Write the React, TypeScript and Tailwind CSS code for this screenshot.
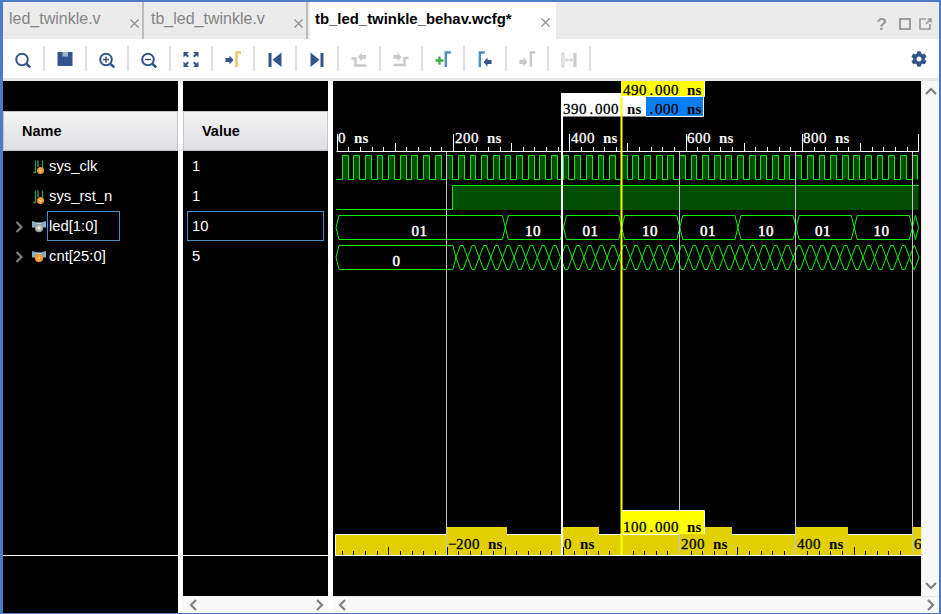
import React from "react";
import { FaCog } from "react-icons/fa";

const NAVY = "#34558b";
const GREY = "#c9c9c9";
const BLUE = "#4a90c0";
const LIME = "#0cf00c";
const DARK = "#004d00";

const Mag = ({ kind }: { kind?: "plus" | "minus" }) => (
  <svg width="24" height="24" viewBox="0 0 24 24" fill="none" stroke={NAVY}>
    <circle cx="11" cy="12.5" r="5.8" strokeWidth="2" />
    <path d="M15.3 16.8l4 3.6" strokeWidth="2.6" />
    {kind && <path d="M8 12.5h6" strokeWidth="1.5" />}
    {kind === "plus" && <path d="M11 9.5v6" strokeWidth="1.5" />}
  </svg>
);

const Ico = ({ children }: { children: React.ReactNode }) => (
  <svg width="24" height="24" viewBox="0 0 24 24" fill="none">
    {children}
  </svg>
);

const ArrowR = ({ x, y, c }: { x: number; y: number; c: string }) => (
  <path d={`M${x} ${y - 2}h4v-2.5l4 4.5-4 4.5v-2.5h-4z`} fill={c} />
);
const ArrowL = ({ x, y, c }: { x: number; y: number; c: string }) => (
  <path d={`M${x + 8} ${y - 2}h-4v-2.5l-4 4.5 4 4.5v-2.5h4z`} fill={c} />
);

const tools: React.ReactNode[] = [
  <Mag key="a" />,
  <Ico key="b">
    <path d="M4.5 5h15v14h-15z" fill={NAVY} />
    <path d="M9.5 5h5.5v4.5h-5.5z" fill="#9fb2d0" />
  </Ico>,
  <Mag key="c" kind="plus" />,
  <Mag key="d" kind="minus" />,
  <Ico key="e">
    <path d="M4.5 5h5.5l-2 2 2 2-1.5 1.5-2-2-2 2zM19.5 5h-5.5l2 2-2 2 1.5 1.5 2-2 2 2zM4.5 20h5.5l-2-2 2-2-1.5-1.5-2 2-2-2zM19.5 20h-5.5l2-2-2-2 1.5-1.5 2 2 2-2z" fill={NAVY} />
  </Ico>,
  <Ico key="f">
    <ArrowR x={4.5} y={13} c={NAVY} />
    <path d="M15.5 20v-14.500h4.500" stroke="#e3c568" strokeWidth="2.400" />
  </Ico>,
  <Ico key="g">
    <path d="M5.500 6h3v14h-3zM18.500 5.500v14.500l-9-7.250z" fill={NAVY} />
  </Ico>,
  <Ico key="h">
    <path d="M15.500 6h3v14h-3zM5.500 5.500v14.500l9-7.250z" fill={NAVY} />
  </Ico>,
  <Ico key="i">
    <path d="M4.500 11.500h4v7h11" stroke={GREY} strokeWidth="2.400" />
    <ArrowL x={11} y={10} c={GREY} />
  </Ico>,
  <Ico key="j">
    <path d="M4.500 18h11v-7h4" stroke={GREY} strokeWidth="2.400" />
    <ArrowR x={4.500} y={10} c={GREY} />
  </Ico>,
  <Ico key="k">
    <path d="M4.500 13.500h8M8.500 9.500v8" stroke="#3fae49" strokeWidth="2.400" />
    <path d="M14.800 20v-14.500h5" stroke={BLUE} strokeWidth="2.400" />
  </Ico>,
  <Ico key="l">
    <path d="M6.800 20v-14.500h5" stroke={BLUE} strokeWidth="2.400" />
    <ArrowL x={10.500} y={15} c={NAVY} />
  </Ico>,
  <Ico key="m">
    <ArrowR x={4.500} y={15} c={GREY} />
    <path d="M15.800 20v-14.500h4.500" stroke={GREY} strokeWidth="2.400" />
  </Ico>,
  <Ico key="n">
    <path d="M5 6h2v14h-2z" stroke={GREY} strokeWidth="1" />
    <path d="M16.500 6h3v14h-3z" fill={GREY} />
    <path d="M8.500 13h7M10.500 11l-2 2 2 2M13.500 11l2 2-2 2" stroke={GREY} strokeWidth="1" />
  </Ico>,
];

const SignalIcon = () => (
  <svg width="12" height="14" viewBox="0 0 12 14" fill="none" className="shrink-0">
    <path d="M0.500 12.500h2v-12M9.500 8v-7.500" stroke="#2f9e57" strokeWidth="1.300" />
    <path d="M5 7v-6.500" stroke="#7fbf95" strokeWidth="1" />
    <circle cx="7.500" cy="10.500" r="3.500" fill="#ef9a2a" />
    <path d="M6.200 9.500l1.300 2.500 1.300-2.500" stroke="#fff" strokeWidth="0.700" />
  </svg>
);

const BusIcon = ({ c }: { c: string }) => (
  <svg width="14" height="13" viewBox="0 0 14 13" fill="none" className="shrink-0">
    <path d="M0 1l5 1.500v5h-5zM14 1l-5 1.500v5h5z" fill="#85aec8" />
    <path d="M5 2.500h4v2h-4z" fill="#cfdde8" />
    <circle cx="7" cy="8" r="3.800" fill={c} stroke={c === "#ef9a2a" ? "#ef9a2a" : "#9a9a9a"} />
    <circle cx="7" cy="8" r="1.500" fill={c === "#ef9a2a" ? "#f7c98a" : "#e8e8e8"} />
  </svg>
);

const Chev = ({ d, w = 10, h = 12 }: { d: string; w?: number; h?: number }) => (
  <svg width={w} height={h} viewBox={`0 0 ${w} ${h}`} fill="none" stroke="#7f7f7f" strokeWidth="2.200">
    <path d={d} />
  </svg>
);

const Close = () => (
  <svg width="9" height="9" viewBox="0 0 9 9" stroke="#8e8e8e" strokeWidth="1.100">
    <path d="M0.500 0.500l8 8M8.500 0.500l-8 8" />
  </svg>
);

const Tab = ({ label, w }: { label: string; w: string }) => (
  <div className={`${w} h-full flex items-center justify-between pl-[6px] pr-[3px] border-r-2 border-[#bdbdbd] mr-[1px]`}>
    <span className="text-[16px] text-[#858585] leading-none -mt-[3px]">{label}</span>
    <span className="flex mt-[5px]"><Close /></span>
  </div>
);

const X0 = 336.7;
const P = 11.63;
const px = (ns: number) => X0 + 0.5815 * ns;
const rng = (a: number, b: number) => Array.from({ length: b - a + 1 }, (_, i) => a + i);
const snap = (x: number) => Math.round(x) + 0.5;

const clockRises = rng(0, 49).map((k) => 341.7 + k * P);
let clockPath = `M336 179.500`;
clockRises.forEach((r) => {
  const a = snap(r);
  const f = Math.min(snap(r + P / 2), 919);
  clockPath += `L${a} 179.500L${a} 155.500L${f} 155.500` + (f < 919 ? `L${f} 179.500` : "");
});

const seg = (a: number, b: number, top: number, bot: number, e: number) => {
  const m = (top + bot) / 2;
  return `M${a} ${m}L${a + e} ${top}L${b - e} ${top}L${b} ${m}L${b - e} ${bot}L${a + e} ${bot}Z`;
};

const ledX = [336, ...rng(0, 7).map((k) => px(290 + k * 100)), 918.5];
const cntX = [336, ...rng(0, 39).map((k) => px(205 + k * 20)), 919];
const ledLabels: [number, string][] = [
  [419.5, "01"], [533, "10"], [590.5, "01"], [650, "10"], [708, "01"], [766, "10"], [823, "01"], [881.5, "10"],
];

/* Fixed-cell chart label: digits on an 8px pitch, the unit in bold. */
const Lab = ({ x, y, t, fill, bold }: { x: number; y: number; t: string; fill: string; bold?: boolean }) => {
  const [num, unit] = t.split(" ");
  const xs = num.split("").map((c, i) => x + i * 8 + (c === "." ? 2.5 : 0)).join(" ");
  const ux = x + (num.length + 1) * 8;
  return (
    <text y={y} fill={fill}>
      <tspan x={xs} stroke={fill} strokeWidth={bold ? 0.5 : 0.3}>{num}</tspan>
      {unit && (
        <tspan x={`${ux} ${ux + 8.5}`} fontWeight="bold">{unit}</tspan>
      )}
    </text>
  );
};

const WaveChart = () => (
  <svg
    width="588"
    height="515"
    viewBox="333 81 588 515"
    className="block shrink-0 font-['Liberation_Serif',serif] text-[15px]"
  >
    <rect x="333" y="81" width="588" height="515" fill="#000" />

    {/* ruler */}
    <path d="M336.500 151.500H919" stroke="#fff" />
    {rng(0, 50).map((i) => {
      const x = snap(X0 + i * P);
      const h = i % 10 === 0 ? 17 : i % 5 === 0 ? 8 : 4;
      return <path key={i} d={`M${x} 151V${151 - h}`} stroke="#fff" />;
    })}
    {([
      [338, "0 ns"], [455, "200 ns"], [571, "400 ns"], [687, "600 ns"], [803, "800 ns"],
    ] as [number, string][]).map(([x, t]) => (
      <Lab key={t} x={x} y={143} t={t} fill="#fff" />
    ))}

    {/* sys_clk */}
    {clockRises.map((r) => (
      <rect key={r} x={snap(r)} y={155.500} width={Math.min(snap(r + P / 2), 919) - snap(r)} height={24} fill={DARK} />
    ))}
    <path d={clockPath} fill="none" stroke={LIME} />

    {/* sys_rst_n */}
    <rect x="453" y="186" width="465.500" height="24" fill={DARK} />
    <path d="M336 209.500H452.500V185.500H919" fill="none" stroke={LIME} />

    {/* led */}
    {ledX.slice(0, -1).map((a, i) => (
      <path key={a} d={seg(a, ledX[i + 1], 215.500, 239.500, 3)} fill="none" stroke={LIME} />
    ))}
    {ledLabels.map(([x, t], i) => (
      <Lab key={i} x={x - 8} y={236} t={t} fill="#fff" bold />
    ))}

    {/* cnt */}
    {cntX.slice(0, -1).map((a, i) => (
      <path key={a} d={seg(a, cntX[i + 1], 245.500, 269.500, i === 0 ? 3 : 4.5)} fill="none" stroke={LIME} />
    ))}
    <Lab x={392.5} y={266} t="0" fill="#fff" bold />

    {/* time axis */}
    <path
      d="M335.500 534.500H446.500V527H507V534.500H563V527H599V534.500H679.500V527H732V534.500H795.500V527H848V534.500H912.500V527H921V555.500H335.500Z"
      fill="#e2d000"
    />
    <path
      d="M335.500 555V534.500H446M507 534.500H561M599 534.500H680M732 534.500H795M848 534.500H912M335 555.500H921"
      fill="none"
      stroke="#fff"
    />
    {rng(-9, 41).map((i) => {
      const x = snap(446.5 + i * P);
      const h = i % 5 === 0 ? 8 : 4;
      return <path key={i} d={`M${x} 555V${555 - h}`} stroke="#000" />;
    })}
    {([
      [448, "\u2212200 ns"], [564, "0 ns"], [681, "200 ns"], [797, "400 ns"], [914, "6"],
    ] as [number, string][]).map(([x, t]) => (
      <Lab key={t} x={x} y={548.5} t={t} fill="#000" />
    ))}

    {/* grey grid markers */}
    {[446.5, 679.5, 795.5, 912.5].map((x) => (
      <path key={x} d={`M${x} 152V555`} stroke="#c4c4c4" />
    ))}

    {/* delta flag */}
    <rect x="621" y="510.500" width="83" height="23.500" fill="#ffff00" />
    <path d="M621 510.500H704.500V534" fill="none" stroke="#fff" />
    <Lab x={623} y={531.5} t="100.000 ns" fill="#000" />

    {/* cursor flags */}
    <rect x="561" y="93" width="85" height="23.500" fill="#fff" />
    <Lab x={563} y={114} t="390.000 ns" fill="#000" />
    <rect x="646" y="97" width="57.500" height="19" fill="#0a7df2" />
    <path d="M703.500 96V116.500H646" fill="none" stroke="#fff" />
    <Lab x={647} y={114} t=".000 ns" fill="#000" />
    <rect x="621" y="81" width="83" height="15" fill="#ffff00" />
    <path d="M620.500 96.500H704.500V81" fill="none" stroke="#fff" />
    <Lab x={623} y={95} t="490.000 ns" fill="#000" />

    {/* cursors */}
    <rect x="561" y="116" width="2" height="439.500" fill="#fff" />
    <rect x="620.500" y="97" width="2" height="458.500" fill="#ffff00" />
  </svg>
);

const rows = [
  { name: "sys_clk", value: "1", icon: <SignalIcon /> },
  { name: "sys_rst_n", value: "1", icon: <SignalIcon /> },
  { name: "led[1:0]", value: "10", icon: <BusIcon c="#b9b9b9" />, selected: true, expand: true },
  { name: "cnt[25:0]", value: "5", icon: <BusIcon c="#ef9a2a" />, expand: true },
];

const Head = ({ label, cls }: { label: string; cls: string }) => (
  <div className={`h-[40px] shrink-0 flex items-center pt-[2px] bg-gradient-to-b from-[#f5f5f5] to-[#dedee2] border border-[#c4c4c4] text-[14.500px] font-bold text-black ${cls}`}>
    {label}
  </div>
);

export default function App() {
  return (
    <div className="w-[941px] h-[614px] overflow-hidden flex flex-col bg-[#4a7cc9] pt-[2px] pl-[3px] pr-[2px] pb-[1px] font-['Liberation_Sans',Arial,sans-serif]">
      {/* tabs */}
      <div className="h-[37px] shrink-0 flex bg-[#ebebeb]">
        <Tab label="led_twinkle.v" w="w-[141px]" />
        <Tab label="tb_led_twinkle.v" w="w-[163px]" />
        <div className="ml-[1px] w-[246px] bg-white flex items-center justify-between pl-[6px] pr-[6px]">
          <span className="text-[14.900px] font-bold text-black leading-none -mt-[3px] -ml-[1px]">tb_led_twinkle_behav.wcfg*</span>
          <span className="flex mt-[4px]"><Close /></span>
        </div>
        <div className="flex-1 flex items-center justify-end gap-[9px] pr-[7px] pt-[7px] text-[#9a9a9a]">
          <span className="text-[17px] font-bold leading-none mr-[3px]">?</span>
          <svg width="12" height="12" viewBox="0 0 12 12" fill="none" stroke="#9a9a9a" strokeWidth="2" className="-mr-[1px]">
            <rect x="1" y="1" width="10" height="10" />
          </svg>
          <svg width="13" height="12" viewBox="0 0 13 12" fill="none" stroke="#9a9a9a" strokeWidth="1.600">
            <path d="M7 1H1v10h10V6M7 6l5-5M8.500 1H12v3.500" />
          </svg>
        </div>
      </div>

      {/* toolbar */}
      <div className="h-[39px] shrink-0 flex items-center bg-white">
        {tools.map((t, i) => (
          <div key={i} className="w-[42px] h-[25px] shrink-0 flex items-center justify-center border-r-2 border-[#e0e0e0]">
            {t}
          </div>
        ))}
        <div className="flex-1 flex justify-end pr-[12px]">
          <FaCog size={16} color={NAVY} />
        </div>
      </div>
      <div className="h-[3px] shrink-0 bg-[#e8e8e8]" />

      {/* main */}
      <div className="flex-1 min-h-0 flex bg-white">
        {/* names */}
        <div className="w-[175px] shrink-0 flex flex-col bg-black">
          <div className="h-[30px] shrink-0" />
          <Head label="Name" cls="pl-[18px]" />
          <div className="h-[405px] shrink-0 border-b border-white">
            {rows.map((r) => (
              <div key={r.name} className="h-[30px] flex items-center pt-[1px] text-[14.800px] text-white relative">
                <span className="w-[13px] ml-[12px] shrink-0 flex">
                  {r.expand && <Chev d="M1.500 1l5 5-5 5" w={8} h={12} />}
                </span>
                <span className="w-[17px] ml-[2px] mr-[2px] flex justify-center shrink-0">{r.icon}</span>
                <span>{r.name}</span>
                {r.selected && (
                  <span className="absolute left-[44px] top-0 w-[73px] h-[30px] border border-[#4a90c8]" />
                )}
              </div>
            ))}
          </div>
          <div className="flex-1" />
        </div>
        <div className="w-[5px] shrink-0" />

        {/* values */}
        <div className="w-[145px] shrink-0 flex flex-col bg-black">
          <div className="h-[30px] shrink-0" />
          <Head label="Value" cls="pl-[18px]" />
          <div className="h-[405px] shrink-0 border-b border-white">
            {rows.map((r) => (
              <div key={r.name} className="h-[30px] flex items-center pt-[1px] pl-[9px] text-[14.800px] text-white relative">
                {r.value}
                {r.selected && (
                  <span className="absolute left-[4px] right-[4px] top-0 h-[30px] border border-[#4a90c8]" />
                )}
              </div>
            ))}
          </div>
          <div className="flex-1" />
          <div className="h-[17px] shrink-0 flex items-center justify-between pl-[5px] pr-[3px] bg-[#f8f8f8]">
            <Chev d="M8 1l-5 5 5 5" />
            <Chev d="M2 1l5 5-5 5" />
          </div>
        </div>
        <div className="w-[5px] shrink-0" />

        {/* waves */}
        <div className="flex-1 min-w-0 flex flex-col">
          <div className="h-[515px] shrink-0 flex">
            <WaveChart />
            <div className="flex-1 flex flex-col items-center justify-between py-[5px] bg-[#f8f8f8] border-l border-[#eeeeee]">
              <Chev d="M1 8l5-5 5 5" w={12} h={10} />
              <Chev d="M1 2l5 5 5-5" w={12} h={10} />
            </div>
          </div>
          <div className="flex-1 flex items-center justify-between pl-[4px] pr-[3px] bg-[#f8f8f8] border-t border-[#e6e6e6]">
            <Chev d="M8 1l-5 5 5 5" />
            <Chev d="M2 1l5 5-5 5" />
          </div>
        </div>
      </div>
    </div>
  );
}
